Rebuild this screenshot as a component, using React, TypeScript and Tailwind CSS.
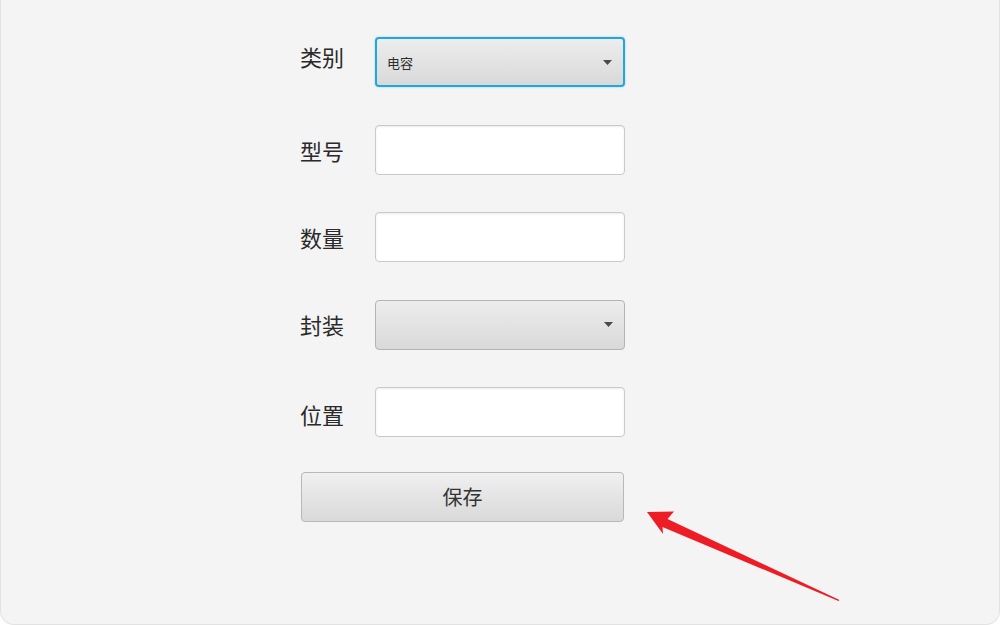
import React from "react";

const font = {
  fontFamily: '"Microsoft YaHei", "Noto Sans CJK SC", "Noto Sans", sans-serif',
};

const Caret = () => (
  <svg width="9" height="5" viewBox="0 0 9 5" className="shrink-0">
    <path d="M0 0 H9 L4.5 5 Z" fill="#4a4a4a" />
  </svg>
);

type FieldProps = {
  label: string;
  kind: "select" | "input";
  value?: string;
  focused?: boolean;
  labelShift?: string;
};

const Field = ({ label, kind, value, focused, labelShift }: FieldProps) => (
  <div className="flex items-center h-[50px]">
    <div
      className={`w-[75px] text-[22px] leading-none text-[#2a2a2a] ${labelShift ?? ""}`}
    >
      {label}
    </div>
    {kind === "select" ? (
      <div
        className={`w-[250px] h-[50px] rounded-[4px] flex items-center justify-between pl-[10px] pr-[11px] bg-gradient-to-b from-[#ededed] to-[#d9d9d9] ${
          focused
            ? "border-2 border-[#22a7dc] shadow-[0_0_2px_#7fcdec]"
            : "border border-[#b4b4b4]"
        }`}
      >
        <span className="text-[13px] text-[#2c2c2c] mt-[2px]">{value}</span>
        <Caret />
      </div>
    ) : (
      <div className="w-[250px] h-[50px] rounded-[4px] bg-white border border-[#c9c9c9] shadow-[inset_0_1px_2px_rgba(0,0,0,0.08)]" />
    )}
  </div>
);

const App = () => {
  return (
    <div className="w-[1000px] h-[625px] bg-white relative overflow-hidden" style={font}>
      <div className="w-full h-full bg-[#f4f4f4] rounded-b-[14px] border-x border-b border-[#e2e2e2]">
        <div className="flex flex-col pl-[299px] pt-[37px] gap-[37.5px]">
          <Field label="类别" kind="select" value="电容" focused labelShift="-mt-[12px]" />
          <Field label="型号" kind="input" />
          <Field label="数量" kind="input" />
          <Field label="封装" kind="select" value="" labelShift="-mt-[2px]" />
          <Field label="位置" kind="input" labelShift="mt-[4px]" />
        </div>
        <button
          className="ml-[300px] mt-[35px] w-[323px] h-[50px] rounded-[4px] border border-[#b8b8b8] bg-gradient-to-b from-[#f0f0f0] to-[#d9d9d9] text-[20px] text-[#333] flex items-center justify-center"
        >
          保存
        </button>
      </div>
      <svg
        className="absolute left-0 top-0 pointer-events-none"
        width="1000"
        height="625"
        viewBox="0 0 1000 625"
      >
        <path
          d="M647 512 L674 511.5 L667.5 519 L839.5 600 L838.5 601 L662.5 527 L663 534 Z"
          fill="#ee1c25"
        />
      </svg>
    </div>
  );
};

export default App;
